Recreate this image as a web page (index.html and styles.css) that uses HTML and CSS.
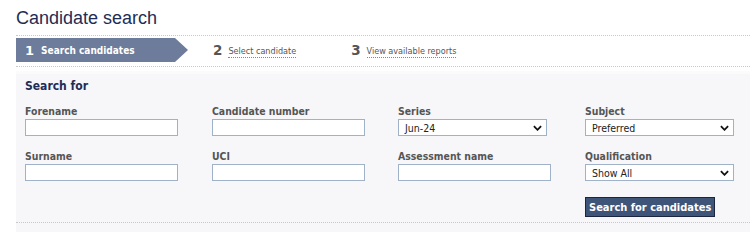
FILE: index.html
```html
<!DOCTYPE html>
<html>
<head>
<meta charset="utf-8">
<link rel="stylesheet" href="styles.css">
</head>
<body>
<div class="page">
  <h1 class="title">Candidate search</h1>
  <div class="steps">
    <div class="step step-active"><span class="step-num">1</span><span class="step-label">Search candidates</span></div>
    <div class="step step-2"><span class="step-num">2</span><a class="step-link">Select candidate</a></div>
    <div class="step step-3"><span class="step-num">3</span><a class="step-link">View available reports</a></div>
  </div>
  <div class="panel">
    <div class="panel-title">Search for</div>
    <div class="grid">
      <div class="field"><label>Forename</label><input class="text" type="text"></div>
      <div class="field"><label>Candidate number</label><input class="text" type="text"></div>
      <div class="field"><label>Series</label><div class="select"><span>Jun-24</span><svg viewBox="0 0 10 6" class="chev"><path d="M1 1l4 4 4-4" /></svg></div></div>
      <div class="field"><label>Subject</label><div class="select"><span>Preferred</span><svg viewBox="0 0 10 6" class="chev"><path d="M1 1l4 4 4-4" /></svg></div></div>
      <div class="field"><label>Surname</label><input class="text" type="text"></div>
      <div class="field"><label>UCI</label><input class="text" type="text"></div>
      <div class="field"><label>Assessment name</label><input class="text" type="text"></div>
      <div class="field"><label>Qualification</label><div class="select"><span>Show All</span><svg viewBox="0 0 10 6" class="chev"><path d="M1 1l4 4 4-4" /></svg></div></div>
    </div>
    <div class="actions"><button class="btn">Search for candidates</button></div>
  </div>
</div>
</body>
</html>
```
FILE: styles.css
```css
html, body { margin: 0; padding: 0; background: #fff; }
body { font-family: "DejaVu Sans Condensed", "DejaVu Sans", sans-serif; overflow: hidden; }
.page { padding-left: 16px; }
.title {
  margin: 0; padding-top: 6px; height: 29px;
  font-family: "Liberation Sans", sans-serif;
  font-weight: normal; font-size: 18px; line-height: 24px; color: #1e2d55;
}
.steps {
  display: flex; align-items: center;
  border-top: 1px dotted #c8c8c8; border-bottom: 1px dotted #c8c8c8;
  padding: 2px 0 4px 0;
}
.step { display: flex; height: 24px; align-items: center; }
.step-active {
  width: 172px; padding-left: 9px; box-sizing: border-box;
  background: #6d7c9a; color: #fff;
  clip-path: polygon(0 0, calc(100% - 13px) 0, 100% 50%, calc(100% - 13px) 100%, 0 100%);
}
.step-num { font-family: "DejaVu Sans", sans-serif; font-weight: bold; font-size: 13.5px; margin-right: 6px; color: #555; }
.step-active .step-num { color: #fff; margin-right: 7px; font-size: 13px; }
.step-label { font-family: "DejaVu Sans Condensed", sans-serif; font-weight: bold; font-size: 10px; }
.step-2 { margin-left: 25px; }
.step-3 { margin-left: 55px; }
.step-link {
  font-family: "DejaVu Sans Condensed", sans-serif; font-size: 9px; color: #555;
  border-bottom: 1px dotted #888; line-height: 12px; margin-top: 2px;
}
.panel {
  margin-top: 4px; background: #f7f7f9; border-top: 3px solid #fbfbfc;
  padding: 5px 0 0 9px; height: 161px; box-sizing: border-box;
}
.panel-title { font-weight: bold; font-size: 12px; color: #1e2d55; height: 25px; line-height: 14px; }
.grid { display: grid; grid-template-columns: 187px 186px 187px 160px; row-gap: 13px; }
.field { display: flex; flex-direction: column; }
.field label { font-weight: bold; font-size: 10.4px; color: #555; line-height: 14px; margin-bottom: 1px; }
.text {
  width: 153px; height: 17px; box-sizing: border-box; margin: 0;
  border: 1px solid #9fb2c8; background: #fff; padding: 0;
}
.select {
  width: 149px; height: 17px; box-sizing: border-box;
  border: 1px solid #9fb2c8; background: #fff;
  display: flex; align-items: center; justify-content: space-between;
  padding: 0 4px 0 6px;
  font-size: 10.5px; color: #222;
}
.chev { width: 9px; height: 6px; fill: none; stroke: #111; stroke-width: 2; }
.actions { margin-left: -9px; padding: 16px 0 5px 569px; border-bottom: 1px dotted #c8c8c8; }
.btn {
  display: block; margin: 0; height: 20px; padding: 0 3px;
  background: #3f5479; color: #fff; border: 1px solid #1c2540;
  font-family: "DejaVu Sans Condensed", sans-serif; font-weight: bold; font-size: 11px;
}
```
